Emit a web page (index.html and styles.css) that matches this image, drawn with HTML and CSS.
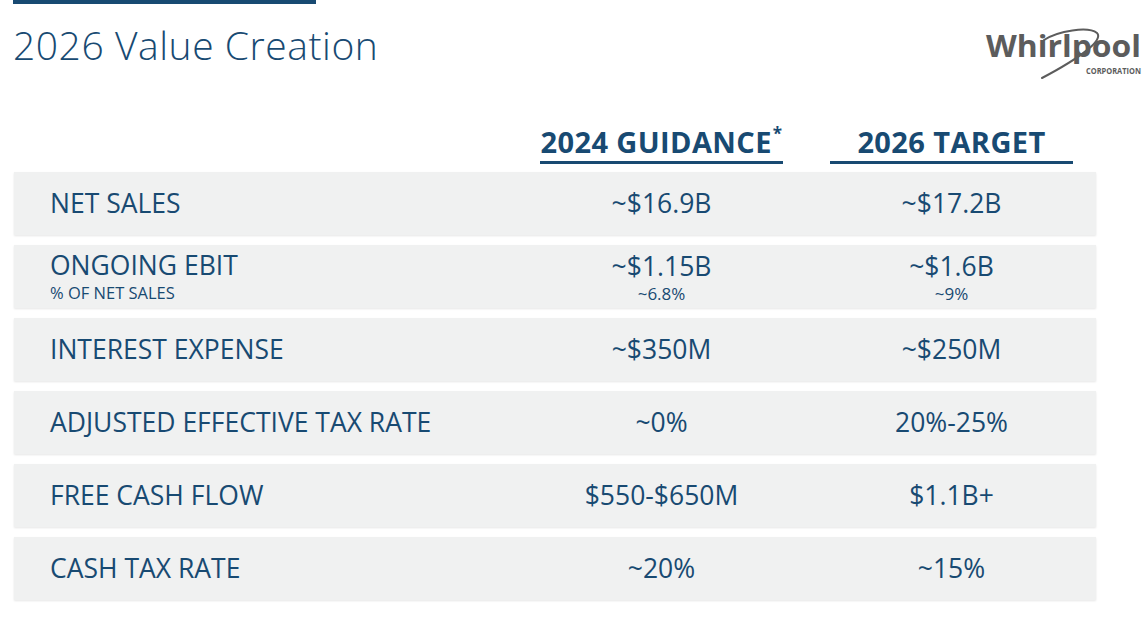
FILE: index.html
```html
<!DOCTYPE html>
<html>
<head>
<meta charset="utf-8">
<link rel="stylesheet" href="styles.css">
</head>
<body>
<div class="topbar"></div>
<header class="head">
  <h1 class="title">2026 Value Creation</h1>
  <svg class="logo" width="170" height="60" viewBox="980 20 170 60">
    <path d="M1044 40 C1058 31, 1088 26, 1097 33 C1104 40, 1080 58, 1042 78" fill="none" stroke="#5c5c5c" stroke-width="2" stroke-linecap="round"/>
    <text x="986" y="57" class="logo-word" textLength="155" lengthAdjust="spacingAndGlyphs">Whirlpool</text>
    <text x="1086" y="74" class="logo-corp" textLength="55" lengthAdjust="spacingAndGlyphs">CORPORATION</text>
  </svg>
</header>
<section class="table">
  <div class="grid colheads">
    <div></div>
    <div class="colhead">2024 GUIDANCE<sup>*</sup></div>
    <div class="colhead">2026 TARGET</div>
  </div>
  <div class="grid row">
    <div class="label">NET SALES</div>
    <div class="val">~$16.9B</div>
    <div class="val">~$17.2B</div>
  </div>
  <div class="grid row two">
    <div class="label">ONGOING EBIT<span class="sub">% OF NET SALES</span></div>
    <div class="val">~$1.15B<span class="sub">~6.8%</span></div>
    <div class="val">~$1.6B<span class="sub">~9%</span></div>
  </div>
  <div class="grid row">
    <div class="label">INTEREST EXPENSE</div>
    <div class="val">~$350M</div>
    <div class="val">~$250M</div>
  </div>
  <div class="grid row">
    <div class="label">ADJUSTED EFFECTIVE TAX RATE</div>
    <div class="val">~0%</div>
    <div class="val">20%-25%</div>
  </div>
  <div class="grid row">
    <div class="label">FREE CASH FLOW</div>
    <div class="val">$550-$650M</div>
    <div class="val">$1.1B+</div>
  </div>
  <div class="grid row">
    <div class="label">CASH TAX RATE</div>
    <div class="val">~20%</div>
    <div class="val">~15%</div>
  </div>
</section>
</body>
</html>
```
FILE: styles.css
```css
html, body {
  margin: 0;
  padding: 0;
  background: #ffffff;
}
body {
  font-family: "Open Sans", "Noto Sans", sans-serif;
  color: #184a72;
  width: 1148px;
  height: 623px;
  overflow: hidden;
}
.topbar {
  margin-left: 13px;
  width: 303px;
  height: 4px;
  background: #184a72;
}
.head {
  display: flex;
  justify-content: space-between;
  align-items: flex-start;
  height: 112px;
}
.title {
  margin: 17px 0 0 13px;
  font-weight: 300;
  font-size: 39px;
  line-height: 48px;
  letter-spacing: 0.55px;
  color: #184a72;
}
.logo {
  display: block;
  margin-top: 16px;
  margin-right: -2px;
}
.logo-word {
  font-family: "Open Sans", sans-serif;
  font-weight: 700;
  font-size: 30px;
  fill: #5c5c5c;
}
.logo-corp {
  font-family: "Open Sans", sans-serif;
  font-weight: 700;
  font-size: 8px;
  fill: #5c5c5c;
}
.table {
  margin-left: 14px;
  width: 1082px;
  display: flex;
  flex-direction: column;
  gap: 10px;
}
.grid {
  display: grid;
  grid-template-columns: 479px 243px 243px;
  column-gap: 47px;
}
.colheads {
  height: 50px;
  margin-bottom: -4px;
}
.colhead {
  font-weight: 700;
  font-size: 29px;
  line-height: 38px;
  white-space: nowrap;
  text-align: center;
  border-bottom: 3px solid #184a72;
  height: 38px;
  padding-top: 7px;
  color: #184a72;
  letter-spacing: 0.4px;
}
.colhead sup {
  font-size: 17px;
  line-height: 0;
  vertical-align: 0;
  position: relative;
  top: -13px;
  margin-left: 1px;
}
.row {
  height: 63px;
  box-sizing: border-box;
  padding-bottom: 2px;
  background: #f0f1f1;
  box-shadow: 0 1px 2px rgba(0, 0, 0, 0.1);
  align-items: center;
}
.label {
  padding-left: 36px;
  font-size: 26.5px;
  line-height: 30px;
  display: flex;
  flex-direction: column;
}
.val {
  font-size: 26.5px;
  line-height: 30px;
  text-align: center;
  display: flex;
  flex-direction: column;
  align-items: center;
}
.sub {
  font-size: 16.5px;
  line-height: 18px;
  margin-top: 4px;
}
.val .sub {
  font-size: 17px;
  margin-top: 4px;
}
.two .val {
  padding-top: 3px;
}
```
